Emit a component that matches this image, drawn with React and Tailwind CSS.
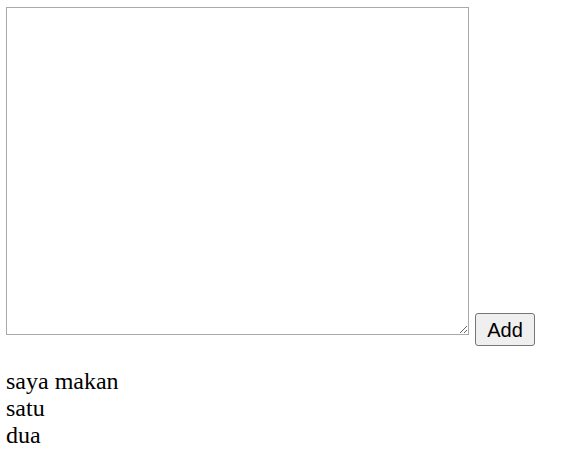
import { useState } from "react";

function App() {
  const [text, setText] = useState("");
  const [items, setItems] = useState(["saya makan", "satu", "dua"]);

  const add = () => {
    if (!text.trim()) return;
    setItems([...items, text]);
    setText("");
  };

  return (
    <div className="min-h-screen bg-white pl-[6px] pt-[7px] font-['Liberation_Serif',serif] text-black">
      {/* Form */}
      <div className="flex items-end gap-[6px]">
        <textarea
          value={text}
          onChange={(e) => setText(e.target.value)}
          className="mb-[11px] h-[328px] w-[463px] border border-[#a9a9a9] bg-white p-[2px] text-[13px] outline-none"
        />
        <button
          onClick={add}
          className="h-[33px] w-[60px] rounded-[3px] border border-[#767676] bg-[#efefef] font-['Liberation_Sans',Arial,sans-serif] text-[20px] leading-none text-black"
        >
          Add
        </button>
      </div>

      {/* List */}
      <div className="mt-[22px] text-[24px] leading-[27px]">
        {items.map((item, i) => (
          <div key={i}>{item}</div>
        ))}
      </div>
    </div>
  );
}

export default App;
